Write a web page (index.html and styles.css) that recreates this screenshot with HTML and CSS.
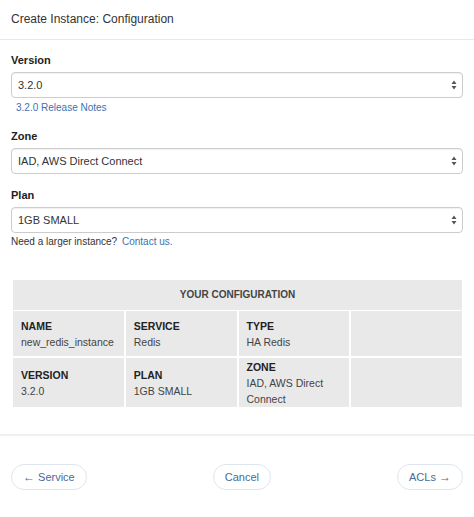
FILE: index.html
```html
<!DOCTYPE html>
<html lang="en">
<head>
    <meta charset="UTF-8">
    <meta name="viewport" content="width=device-width, initial-scale=1.0">
    <title>Create Instance: Configuration</title>
    <link rel="stylesheet" href="styles.css">
</head>
<body>
    <div id="modal">
        <div class="modal-header">Create Instance: Configuration</div>

        <div class="modal-body">
            <div class="form-group">
                <label for="version">Version</label>
                <div class="select-wrap">
                    <select id="version"><option>3.2.0</option></select>
                    <svg class="select-arrows" width="6" height="10" viewBox="0 0 6 10"><path d="M3 0.5L5.5 4H0.5Z M3 9.5L0.5 6H5.5Z" fill="#555"/></svg>
                </div>
                <a class="release-notes" href="#">3.2.0 Release Notes</a>
            </div>

            <div class="form-group">
                <label for="zone">Zone</label>
                <div class="select-wrap">
                    <select id="zone"><option>IAD, AWS Direct Connect</option></select>
                    <svg class="select-arrows" width="6" height="10" viewBox="0 0 6 10"><path d="M3 0.5L5.5 4H0.5Z M3 9.5L0.5 6H5.5Z" fill="#555"/></svg>
                </div>
            </div>

            <div class="form-group">
                <label for="plan">Plan</label>
                <div class="select-wrap">
                    <select id="plan"><option>1GB SMALL</option></select>
                    <svg class="select-arrows" width="6" height="10" viewBox="0 0 6 10"><path d="M3 0.5L5.5 4H0.5Z M3 9.5L0.5 6H5.5Z" fill="#555"/></svg>
                </div>
                <p class="help">Need a larger instance? <a href="#">Contact us.</a></p>
            </div>

            <div class="config">
                <div class="config-title">YOUR CONFIGURATION</div>
                <div class="config-grid">
                    <div class="cell"><strong>NAME</strong><span>new_redis_instance</span></div>
                    <div class="cell"><strong>SERVICE</strong><span>Redis</span></div>
                    <div class="cell"><strong>TYPE</strong><span>HA Redis</span></div>
                    <div class="cell"></div>
                    <div class="cell"><strong>VERSION</strong><span>3.2.0</span></div>
                    <div class="cell"><strong>PLAN</strong><span>1GB SMALL</span></div>
                    <div class="cell"><strong>ZONE</strong><span>IAD, AWS Direct Connect</span></div>
                    <div class="cell"></div>
                </div>
            </div>
        </div>

        <div class="modal-footer">
            <button class="pill"><span class="arrow">&larr;</span> Service</button>
            <button class="pill">Cancel</button>
            <button class="pill">ACLs <span class="arrow">&rarr;</span></button>
        </div>
    </div>
</body>
</html>
```

FILE: styles.css
```css
body {
    margin: 0;
    font-family: "Liberation Sans", Arial, sans-serif;
    font-size: 11px;
    color: #333;
    background: #fff;
}

.modal-header {
    height: 39px;
    line-height: 39px;
    padding: 0 11px;
    font-size: 12px;
    color: #333;
    border-bottom: 1px solid #e8e8e8;
}

.modal-body {
    padding: 13px 11px 0;
}

.form-group {
    margin-bottom: 14px;
}

.form-group label {
    display: block;
    font-weight: bold;
    line-height: 14px;
    margin-bottom: 5px;
    color: #222;
}

.select-wrap {
    position: relative;
}

.select-wrap select {
    display: block;
    width: 100%;
    height: 26px;
    padding: 0 20px 0 6px;
    border: 1px solid #ccc;
    border-radius: 4px;
    background: #fff;
    box-shadow: inset 0 1px 1px rgba(0,0,0,0.06);
    font-family: inherit;
    font-size: 11px;
    color: #333;
    -webkit-appearance: none;
    appearance: none;
}

.select-arrows {
    position: absolute;
    right: 6px;
    top: 8px;
}

.release-notes {
    display: block;
    margin: 3px 0 3px;
    padding-left: 5px;
    font-size: 10px;
    line-height: 14px;
    color: #3c72b0;
    text-decoration: none;
}

.help {
    margin: 2px 0 0;
    font-size: 10px;
    line-height: 14px;
    color: #333;
}

.help a {
    margin-left: 2px;
    color: #3c72b0;
    text-decoration: none;
}

.config {
    margin: 31px 1px 0 2px;
}

.config-title {
    height: 30px;
    line-height: 30px;
    margin-bottom: 1px;
    text-align: center;
    font-size: 10px;
    font-weight: bold;
    color: #444;
    background: #e9e9e9;
}

.config-grid {
    display: grid;
    grid-template-columns: repeat(4, 1fr);
    grid-template-rows: 45px 49px;
    gap: 2px;
    margin-top: 1px;
}

.cell {
    display: flex;
    flex-direction: column;
    justify-content: center;
    padding: 0 8px;
    background: #e9e9e9;
    font-size: 10.5px;
    line-height: 16px;
    color: #444;
}

.cell strong {
    color: #222;
}

.modal-footer {
    display: flex;
    justify-content: space-between;
    align-items: center;
    margin-top: 27px;
    padding: 28px 11px;
    border-top: 2px solid #f0f0f0;
}

.pill {
    height: 26px;
    padding: 0 11px;
    border: 1px solid #dfe5ee;
    border-radius: 13px;
    background: #fff;
    font-family: inherit;
    font-size: 11px;
    color: #4a6a96;
    cursor: pointer;
}

.pill .arrow {
    font-size: 12px;
}
```
